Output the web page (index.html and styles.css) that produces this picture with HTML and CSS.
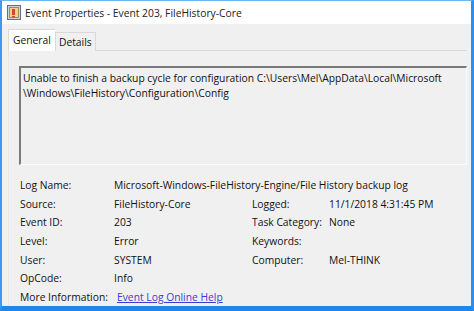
FILE: index.html
```html
<!DOCTYPE html>
<html>
<head>
<meta charset="utf-8">
<link rel="stylesheet" href="styles.css">
</head>
<body>
<div class="frame">
  <div class="titlebar">
    <svg class="appicon" width="14" height="15" viewBox="0 0 14 15">
      <rect x="0.5" y="0.5" width="13" height="14" fill="#c9d6e6" stroke="#5a6f8c"/>
      <rect x="2.5" y="2.5" width="9" height="10" fill="#f1d28a" stroke="#a78a4e"/>
      <rect x="5" y="4" width="3" height="6" fill="#d4472f"/>
      <rect x="5" y="11" width="3" height="1.5" fill="#d4472f"/>
    </svg>
    <span class="title">Event Properties - Event 203, FileHistory-Core</span>
  </div>
  <div class="body">
    <div class="tabs">
      <div class="tab active">General</div>
      <div class="tab">Details</div>
    </div>
    <div class="pane">
      <div class="desc">Unable to finish a backup cycle for configuration C:\Users\Mel\AppData\Local\Microsoft<br>\Windows\FileHistory\Configuration\Config</div>
      <div class="fields">
        <div class="row"><span class="lab">Log Name:</span><span class="val wide">Microsoft-Windows-FileHistory-Engine/File History backup log</span></div>
        <div class="row"><span class="lab">Source:</span><span class="val">FileHistory-Core</span><span class="lab2">Logged:</span><span class="val2">11/1/2018 4:31:45 PM</span></div>
        <div class="row"><span class="lab">Event ID:</span><span class="val">203</span><span class="lab2">Task Category:</span><span class="val2">None</span></div>
        <div class="row"><span class="lab">Level:</span><span class="val">Error</span><span class="lab2">Keywords:</span><span class="val2"></span></div>
        <div class="row"><span class="lab">User:</span><span class="val">SYSTEM</span><span class="lab2">Computer:</span><span class="val2">Mel-THINK</span></div>
        <div class="row"><span class="lab">OpCode:</span><span class="val">Info</span></div>
        <div class="row last"><span class="lab">More Information:</span><span class="val"><a class="link" href="#">Event Log Online Help</a></span></div>
      </div>
    </div>
  </div>
</div>
</body>
</html>
```
FILE: styles.css
```css
html, body { margin: 0; padding: 0; }
body {
  width: 474px; height: 311px; overflow: hidden;
  background: #2b8ee8;
  font-family: "Open Sans", "Noto Sans", sans-serif;
  font-size: 10.3px; color: #111;
}
.frame {
  box-sizing: border-box;
  width: 474px; height: 311px;
  border-left: 2px solid #3d9af0;
  border-right: 3px solid #2a8ff0;
  border-top: 1px solid #6ab6f5;
  border-bottom: 5px solid #1f86ea;
  display: flex; flex-direction: column;
  background: #f0f0f0;
}
.titlebar {
  flex: none;
  height: 23px; background: #fff;
  display: flex; align-items: center; gap: 4px;
  padding-left: 5px;
}
.appicon { display: block; }
.title { font-size: 10.3px; color: #222; }
.body { flex: 1; min-height: 0; padding: 6px 4px 0 6px; display: flex; flex-direction: column; }
.tabs { flex: none; display: flex; align-items: flex-end; height: 21px; position: relative; z-index: 1; }
.tab {
  border: 1px solid #d9d9d9; border-bottom: none;
  background: #f0f0f0; padding: 0 3px; height: 18px; line-height: 18px;
}
.tab.active { background: #fff; height: 21px; line-height: 21px; padding: 0 4px; border-right: none; }
.pane {
  flex: 1; min-height: 0; border-top: 1px solid #d9d9d9; border-left: 1px solid #e6e6e6;
  background: #f0f0f0; margin-top: -1px;
  padding: 15px 0 0 10px;
}
.desc {
  height: 99px; box-sizing: border-box;
  border-top: 2px solid #7a7a7a; border-left: 2px solid #7a7a7a;
  border-bottom: 1px solid #fafafa; border-right: 1px solid #fafafa;
  padding: 3px 0 0 2px; line-height: 15px; white-space: nowrap;
}
.fields { padding: 11px 0 0 1px; }
.row { display: flex; height: 18.7px; line-height: 18.7px; white-space: nowrap; }
.row.last { height: 16px; }
.lab { width: 94px; flex: none; }
.val { width: 138px; flex: none; }
.val.wide { width: auto; }
.lab2 { width: 77px; flex: none; }
.link { color: #3c3cd0; padding-left: 3px; }
```
